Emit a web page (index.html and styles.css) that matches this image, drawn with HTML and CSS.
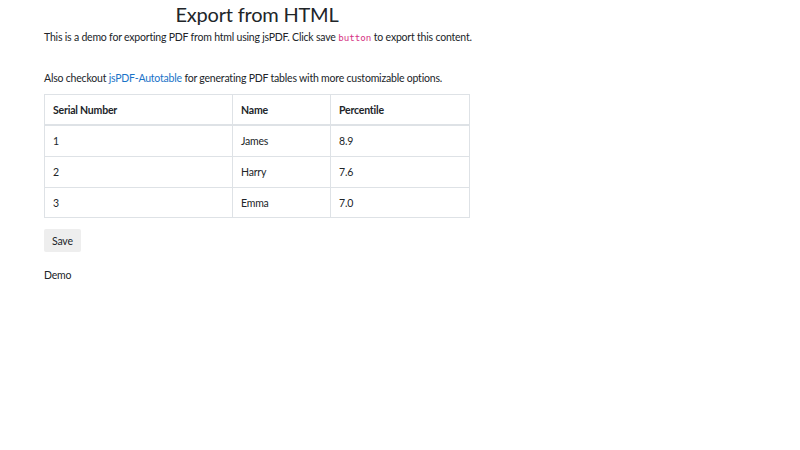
FILE: index.html
```html
<!DOCTYPE html>
<html>
<head>
<meta charset="utf-8">
<link rel="stylesheet" href="styles.css">
</head>
<body>
<div class="container">
  <h1 class="title">Export from HTML</h1>
  <p class="intro">This is a demo for exporting PDF from html using jsPDF. Click save <code>button</code> to export this content.</p>
  <p class="also">Also checkout <a href="#">jsPDF-Autotable</a> for generating PDF tables with more customizable options.</p>
  <table class="data">
    <thead>
      <tr><th class="c1">Serial Number</th><th class="c2">Name</th><th>Percentile</th></tr>
    </thead>
    <tbody>
      <tr><td>1</td><td>James</td><td>8.9</td></tr>
      <tr><td>2</td><td>Harry</td><td>7.6</td></tr>
      <tr><td>3</td><td>Emma</td><td>7.0</td></tr>
    </tbody>
  </table>
  <button class="save">Save</button>
  <p class="demo">Demo</p>
</div>
</body>
</html>
```

FILE: styles.css
```css
html, body {
  margin: 0;
  padding: 0;
  background: #fff;
}
body {
  font-family: Lato, "Noto Sans", sans-serif;
  font-size: 10.5px;
  letter-spacing: -0.2px;
  color: #212529;
}
.container {
  width: 426px;
  margin-left: 44px;
  padding-top: 1px;
}
.title {
  margin: 0;
  font-size: 20px;
  font-weight: 400;
  letter-spacing: -0.2px;
  text-align: center;
  line-height: 26px;
}
.intro {
  margin: 0;
  line-height: 20px;
  white-space: nowrap;
}
code {
  font-family: "DejaVu Sans Mono", "Liberation Mono", monospace;
  font-size: 9.2px;
  letter-spacing: 0;
  color: #d63384;
}
.also {
  margin: 20px 0 0 0;
  line-height: 20px;
  white-space: nowrap;
}
a {
  color: #1a73c8;
  text-decoration: none;
}
.data {
  margin-top: 6px;
  width: 426px;
  border-collapse: collapse;
}
.data th, .data td {
  border: 1px solid #dee2e6;
  text-align: left;
  padding: 0 8px;
  height: 30px;
  vertical-align: middle;
}
.data th {
  font-weight: 700;
  border-bottom-width: 2px;
  height: 29px;
}
.data tbody tr:last-child td {
  height: 29px;
}
.data .c1 { width: 171px; }
.data .c2 { width: 81px; }
.save {
  display: block;
  margin-top: 11px;
  font-family: inherit;
  font-size: 10.5px;
  letter-spacing: -0.2px;
  color: #212529;
  background: #eeeeee;
  border: none;
  border-radius: 2px;
  padding: 0 8px;
  height: 23px;
}
.demo {
  margin: 13px 0 0 0;
  line-height: 20px;
}
```
